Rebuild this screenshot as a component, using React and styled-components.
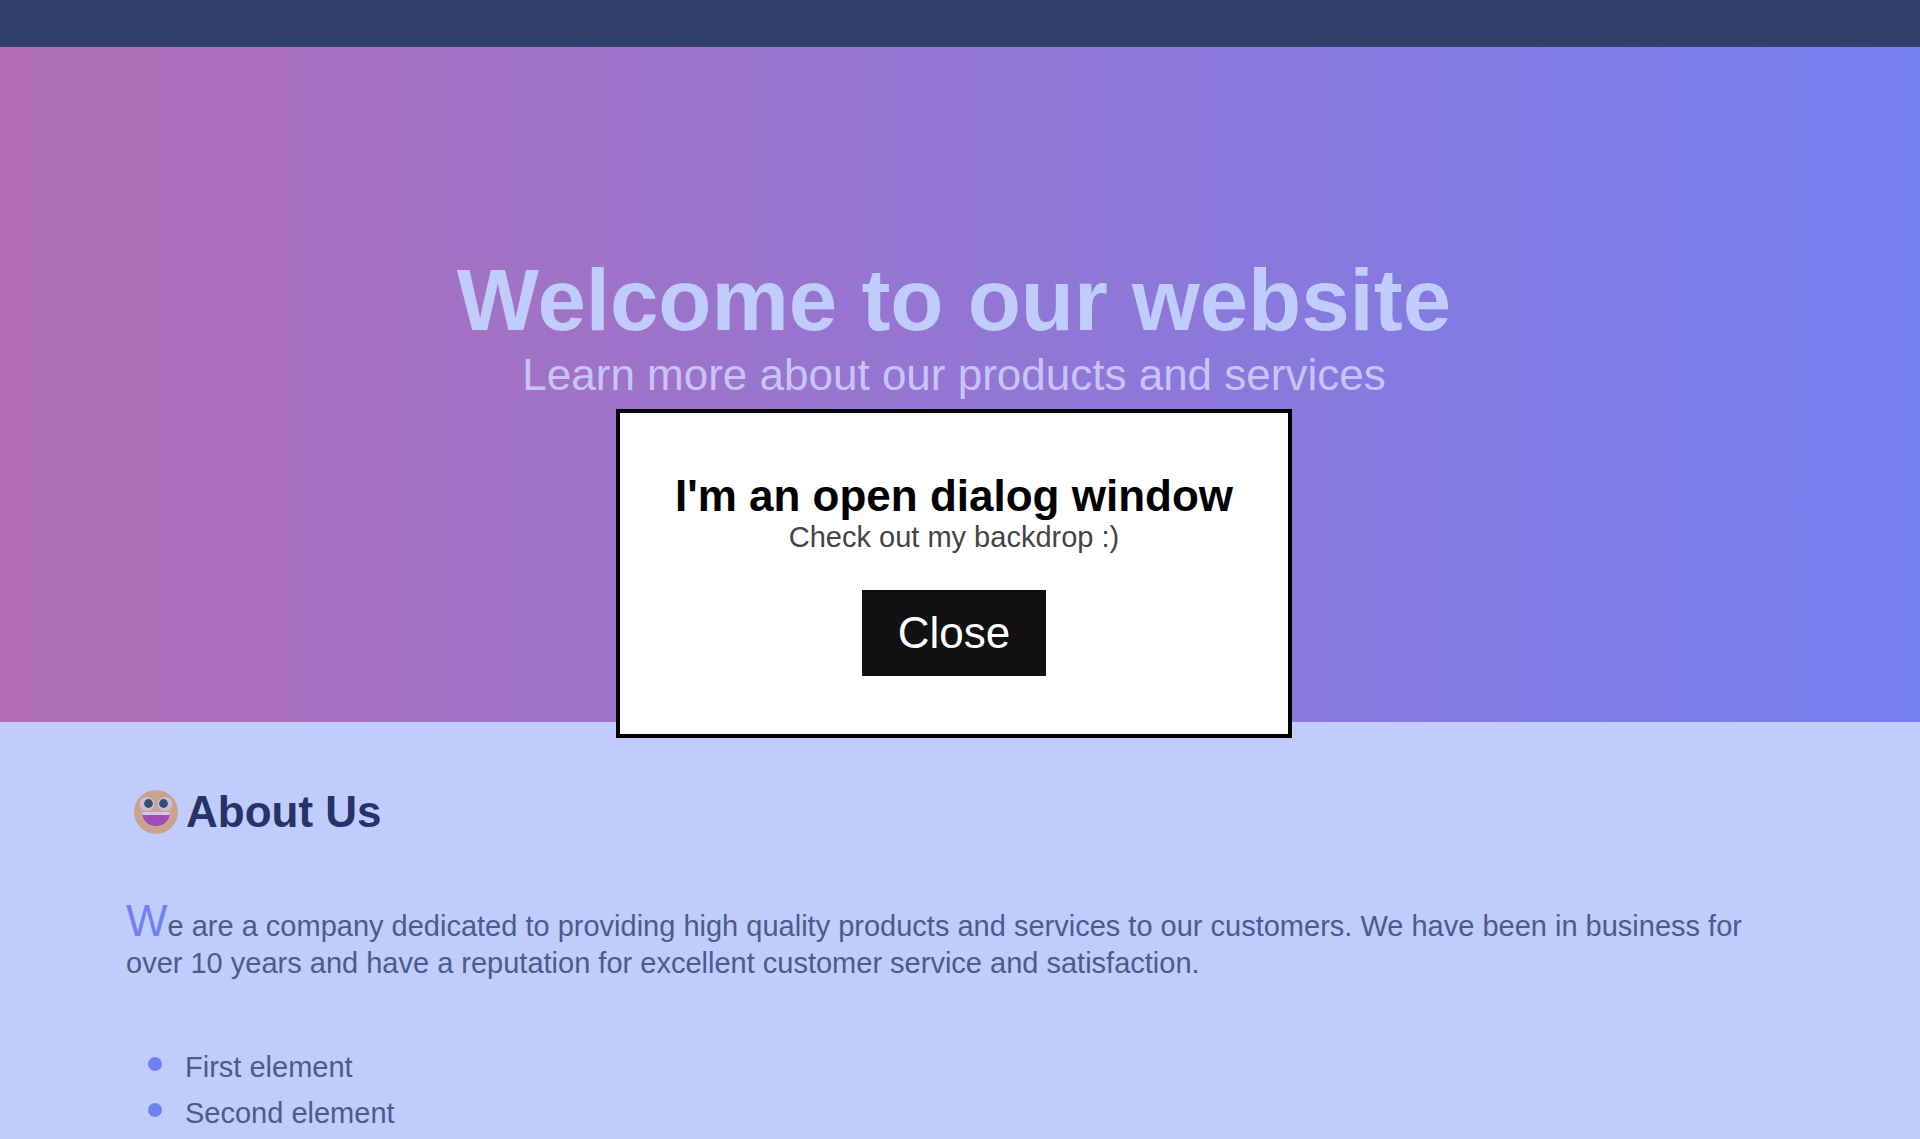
import React from "react";
import styled, { createGlobalStyle } from "styled-components";

export default function App() {
  const items = ["First element", "Second element"];

  return (
    <Page>
      <GlobalStyle />
      <TopBar />
      <Hero>
        <HeroTitle>Welcome to our website</HeroTitle>
        <HeroText>Learn more about our products and services</HeroText>
      </Hero>
      <Main>
        <SectionTitle>
          <Smiley />
          About Us
        </SectionTitle>
        <Paragraph>
          We are a company dedicated to providing high quality products and services to our customers. We have been in
          business for over 10 years and have a reputation for excellent customer service and satisfaction.
        </Paragraph>
        <List>
          {items.map((item) => (
            <ListItem key={item}>{item}</ListItem>
          ))}
        </List>
      </Main>
      <Backdrop>
        <Dialog open aria-labelledby="dialog-title">
          <DialogTitle id="dialog-title">I'm an open dialog window</DialogTitle>
          <DialogText>Check out my backdrop :)</DialogText>
          <CloseButton type="button">Close</CloseButton>
        </Dialog>
      </Backdrop>
    </Page>
  );
}

function Smiley() {
  return (
    <SmileyIcon viewBox="0 0 44 44" aria-hidden="true">
      <circle cx="22" cy="22" r="22" fill="#c9a390" />
      <ellipse cx="13" cy="14" rx="7.5" ry="7" fill="#c8bfd4" />
      <ellipse cx="31" cy="14" rx="7.5" ry="7" fill="#c8bfd4" />
      <circle cx="14.5" cy="13.5" r="4.4" fill="#3c4a78" />
      <circle cx="29.5" cy="13.5" r="4.4" fill="#3c4a78" />
      <path d="M8 22H36C36 30 30 36 22 36S8 30 8 22Z" fill="#a04bb8" />
      <path d="M8 22H36L35.5 25H8.5Z" fill="#d3c6ee" />
    </SmileyIcon>
  );
}

const GlobalStyle = createGlobalStyle`
  * {
    box-sizing: border-box;
    margin: 0;
    padding: 0;
  }

  body {
    font-family: "Liberation Sans", Arial, sans-serif;
    font-size: 29px;
    line-height: 37px;
    color: #4c5a8e;
    background: #c0ccfc;
  }
`;

const Page = styled.div`
  min-height: 100vh;
`;

const TopBar = styled.header`
  height: 47px;
  background: #32406c;
`;

const Hero = styled.section`
  padding: 203px 12px 322px 0;
  text-align: center;
  color: #c0ccfc;
  background: linear-gradient(to right, #b26db6, #747ff0);
`;

const HeroTitle = styled.h1`
  font-size: 87px;
  line-height: 100px;
`;

const HeroText = styled.p`
  font-size: 44px;
  line-height: 50px;
  color: #c8c4fa;
`;

const Main = styled.main`
  padding: 65px 138px 0 126px;
`;

const SectionTitle = styled.h2`
  display: flex;
  align-items: center;
  font-size: 44px;
  line-height: 50px;
  color: #26326a;
`;

const SmileyIcon = styled.svg`
  width: 44px;
  height: 44px;
  margin: 0 8px;
`;

const Paragraph = styled.p`
  margin-top: 65px;

  &::first-letter {
    font-size: 44px;
    color: #7082f0;
  }
`;

const List = styled.ul`
  display: grid;
  gap: 9px;
  margin-top: 67px;
  padding-left: 22px;
  list-style: none;
`;

const ListItem = styled.li`
  display: flex;
  align-items: center;
  gap: 23px;

  &::before {
    content: "";
    width: 14px;
    height: 14px;
    margin-bottom: 8px;
    border-radius: 50%;
    background: #7082f0;
  }
`;

const Backdrop = styled.div`
  position: fixed;
  inset: 0;
  display: grid;
  place-items: center;
  padding: 8px 12px 0 0;
`;

const Dialog = styled.dialog`
  position: static;
  padding: 58px 55px;
  border: 4px solid #000;
  text-align: center;
  color: #000;
  background: #fff;
`;

const DialogTitle = styled.h2`
  font-size: 44px;
  line-height: 50px;
`;

const DialogText = styled.p`
  line-height: 33px;
  color: #444;
`;

const CloseButton = styled.button`
  margin-top: 36px;
  padding: 18px 36px;
  border: none;
  font-family: inherit;
  font-size: 44px;
  line-height: 50px;
  color: #fff;
  background: #111;
  cursor: pointer;
`;
